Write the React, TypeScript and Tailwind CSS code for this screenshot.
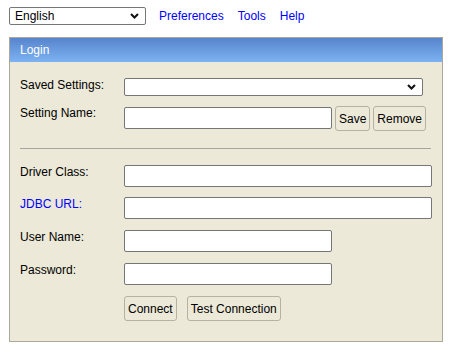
/**
 * H2-style console login page.
 */

const font = "font-['Liberation_Sans',Arial,sans-serif] text-[12px] leading-[14px]";

function Chevron(): React.ReactNode {
	return (
		<svg width="9" height="6" viewBox="0 0 9 6" className="shrink-0">
			<path d="M1 1l3.5 3.5L8 1" fill="none" stroke="#111" strokeWidth="2" />
		</svg>
	);
}

function FakeSelect({ value, className = "" }: { value?: string; className?: string }): React.ReactNode {
	return (
		<div
			className={`flex h-[18px] items-center justify-between rounded-[2px] border border-[#767676] bg-white pl-[5px] pr-[6px] text-black ${className}`}
		>
			<span>{value}</span>
			<Chevron />
		</div>
	);
}

function TextInput({ className = "" }: { className?: string }): React.ReactNode {
	return (
		<input
			type="text"
			className={`h-[22px] rounded-[2px] border border-[#767676] bg-white px-[3px] outline-none ${className}`}
		/>
	);
}

function Btn({ children }: { children: React.ReactNode }): React.ReactNode {
	return (
		<button
			type="button"
			className="h-[25px] rounded-[3px] border border-[#b5b2a3] bg-[#ece9d8] px-[3px] text-black"
		>
			{children}
		</button>
	);
}

function Row({
	label,
	blue = false,
	className = "",
	children,
}: {
	label: string;
	blue?: boolean;
	className?: string;
	children: React.ReactNode;
}): React.ReactNode {
	return (
		<div className={`flex items-start ${className}`}>
			<div className={`w-[104px] shrink-0 ${blue ? "text-[#0000ff]" : "text-black"}`}>{label}</div>
			{children}
		</div>
	);
}

export default function App(): React.ReactNode {
	return (
		<div className={`${font} min-h-screen bg-white`}>
			{/* Top bar */}
			<div className="flex items-center pl-[9px] pt-[7px]">
				<FakeSelect value="English" className="w-[137px]" />
				<div className="ml-[13px] flex gap-[14px] text-[#0000ff]">
					<a>Preferences</a>
					<a>Tools</a>
					<a>Help</a>
				</div>
			</div>

			{/* Login panel */}
			<div className="ml-[9px] mt-[12px] w-[434px] border border-[#aca899] bg-[#ece9d8]">
				<div className="flex h-[24px] items-center bg-gradient-to-b from-[#5884cd] to-[#7db3f2] pl-[10px] text-white">
					Login
				</div>

				<div className="pb-[20px] pl-[10px] pr-[10px] pt-[16px]">
					<Row label="Saved Settings:">
						<FakeSelect className="w-[299px]" />
					</Row>

					<Row label="Setting Name:" className="mt-[10px]">
						<TextInput className="mt-[1px] w-[208px]" />
						<div className="ml-[3px] flex gap-[3px]">
							<Btn>Save</Btn>
							<Btn>Remove</Btn>
						</div>
					</Row>

					<div className="mr-[1px] mt-[17px] h-px bg-[#a5a5a5]" />

					<Row label="Driver Class:" className="mt-[16px]">
						<TextInput className="w-[308px]" />
					</Row>
					<Row label="JDBC URL:" blue className="mt-[10px]">
						<TextInput className="w-[308px]" />
					</Row>
					<Row label="User Name:" className="mt-[11px]">
						<TextInput className="w-[208px]" />
					</Row>
					<Row label="Password:" className="mt-[11px]">
						<TextInput className="w-[208px]" />
					</Row>

					<div className="ml-[104px] mt-[11px] flex gap-[10px]">
						<Btn>Connect</Btn>
						<Btn>Test Connection</Btn>
					</div>
				</div>
			</div>
		</div>
	);
}
